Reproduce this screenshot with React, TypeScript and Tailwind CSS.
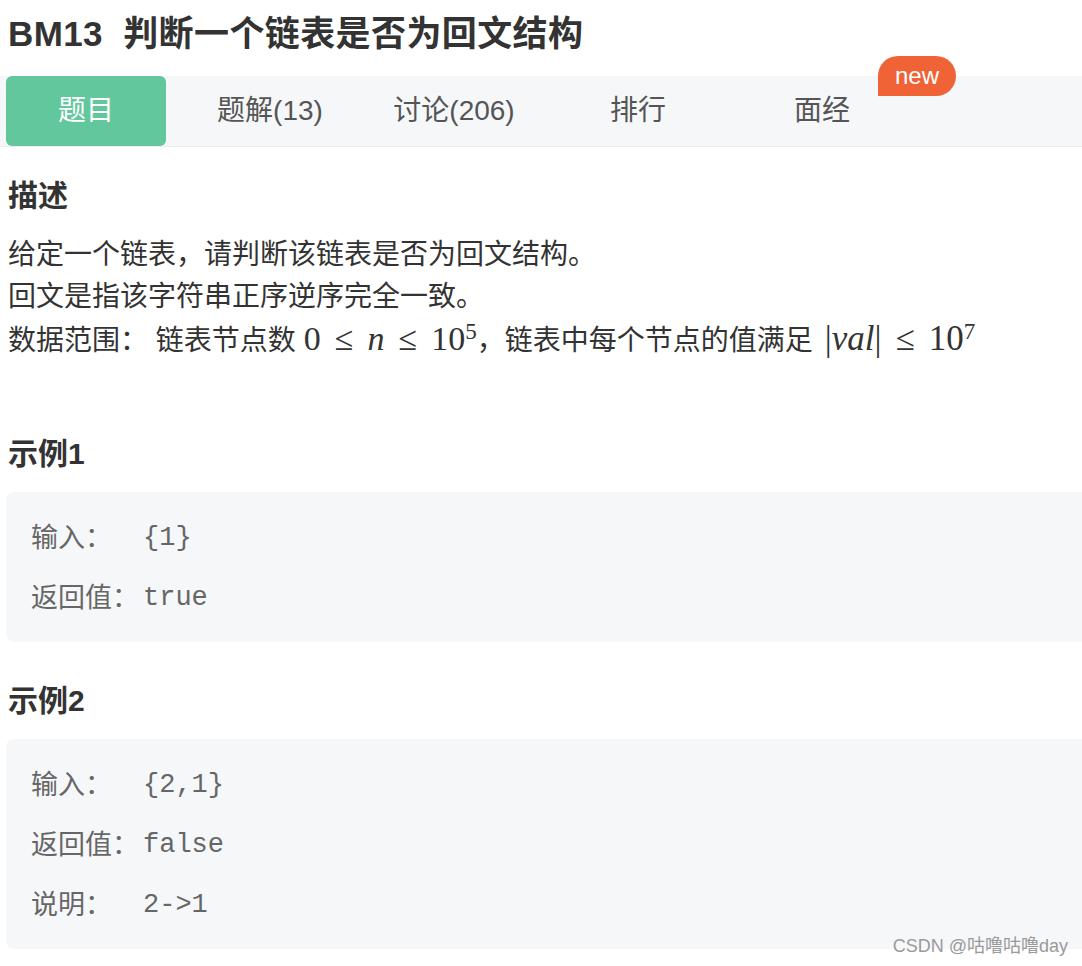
import React from 'react';

const sans = { fontFamily: '"Liberation Sans", "Noto Sans CJK SC", sans-serif' };
const mono = { fontFamily: '"Liberation Mono", "Noto Sans CJK SC", monospace' };
const serif = { fontFamily: '"Liberation Serif", "DejaVu Serif", serif' };

const tabs = ['题目', '题解(13)', '讨论(206)', '排行', '面经'];

function Tex({ children, first }: { children: React.ReactNode; first?: boolean }) {
  return (
    <span className={first ? 'ml-[8px] text-[34px] text-[#333]' : 'ml-[12px] text-[35px] text-[#333]'} style={serif}>
      {children}
    </span>
  );
}

function Leq() {
  return <span className="mx-[14px]">≤</span>;
}

function Row({ label, value }: { label: string; value: string }) {
  return (
    <div className="flex items-center leading-[40px]">
      <span className="w-[112px] shrink-0 text-[27px] text-[#666]">{label}</span>
      <span className="text-[27px] text-[#666]" style={mono}>
        {value}
      </span>
    </div>
  );
}

function Example({ title, rows }: { title: string; rows: [string, string][] }) {
  return (
    <>
      <h2 className="ml-[8px] text-[30px] font-bold leading-[36px] text-[#333]">{title}</h2>
      <div className="ml-[6px] mt-[20px] flex flex-col gap-[20px] rounded-l-lg bg-[#f6f7f9] pl-[25px] pt-[26px] pb-[24px]">
        {rows.map(([l, v]) => (
          <Row key={l} label={l} value={v} />
        ))}
      </div>
    </>
  );
}

export default function App() {
  return (
    <div className="relative h-[966px] w-full overflow-hidden bg-white" style={sans}>
      <h1 className="ml-[8px] mt-[14px] mb-[22px] text-[35px] font-bold leading-[40px] tracking-[0.4px] text-[#333]">
        BM13&nbsp;&nbsp;判断一个链表是否为回文结构
      </h1>

      <div className="relative flex h-[71px] gap-[24px] border-b border-[#ebecee] bg-[#f6f7f9] pl-[6px]">
        {tabs.map((t, i) => (
          <div
            key={t}
            className={
              i === 0
                ? 'flex h-[70px] w-[160px] items-center justify-center rounded-md bg-[#62c79c] text-[28px] text-white'
                : 'flex h-[70px] w-[160px] items-center justify-center text-[28px] text-[#555]'
            }
          >
            {t}
          </div>
        ))}
        <span className="absolute left-[878px] top-[-20px] flex h-[40px] w-[78px] items-center justify-center rounded-t-[20px] rounded-br-[20px] bg-[#ef6337] text-[24px] font-medium text-white">
          new
        </span>
      </div>

      <h2 className="ml-[8px] mt-[31px] text-[30px] font-bold leading-[36px] text-[#333]">描述</h2>
      <div className="ml-[8px] mt-[20px] text-[28px] leading-[42px] text-[#333]">
        <p>给定一个链表，请判断该链表是否为回文结构。</p>
        <p>回文是指该字符串正序逆序完全一致。</p>
        <p className="whitespace-nowrap">
          数据范围：&nbsp;链表节点数
          <Tex first>
            0<Leq />
            <i>n</i>
            <Leq />
            10<sup className="text-[23px]">5</sup>
          </Tex>
          ，链表中每个节点的值满足
          <Tex>
            |<i>val</i>|<Leq />
            10<sup className="text-[23px]">7</sup>
          </Tex>
        </p>
      </div>

      <div className="mt-[74px]">
        <Example title="示例1" rows={[['输入：', '{1}'], ['返回值：', 'true']]} />
      </div>
      <div className="mt-[41px]">
        <Example
          title="示例2"
          rows={[
            ['输入：', '{2,1}'],
            ['返回值：', 'false'],
            ['说明：', '2->1'],
          ]}
        />
      </div>

      <span className="absolute right-[14px] top-[933px] text-[18px] leading-[26px] text-[#9a9a9a]">
        CSDN @咕噜咕噜day
      </span>
    </div>
  );
}
